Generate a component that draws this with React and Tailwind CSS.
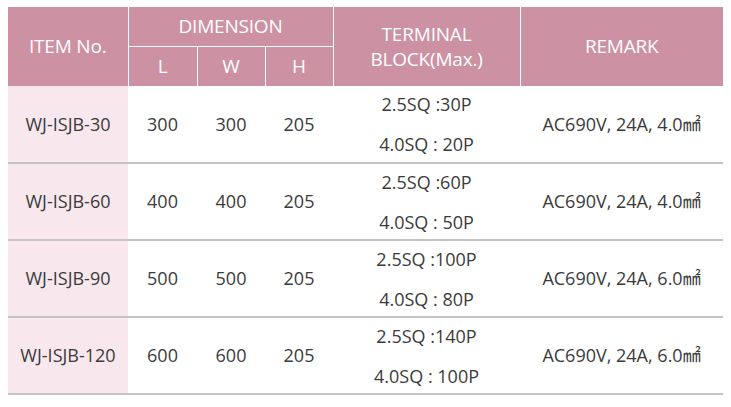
import React from "react";

const rows = [
  { item: "WJ-ISJB-30", l: 300, w: 300, h: 205, a: "2.5SQ :30P", b: "4.0SQ : 20P", remark: "AC690V, 24A, 4.0㎟" },
  { item: "WJ-ISJB-60", l: 400, w: 400, h: 205, a: "2.5SQ :60P", b: "4.0SQ : 50P", remark: "AC690V, 24A, 4.0㎟" },
  { item: "WJ-ISJB-90", l: 500, w: 500, h: 205, a: "2.5SQ :100P", b: "4.0SQ : 80P", remark: "AC690V, 24A, 6.0㎟" },
  { item: "WJ-ISJB-120", l: 600, w: 600, h: 205, a: "2.5SQ :140P", b: "4.0SQ : 100P", remark: "AC690V, 24A, 6.0㎟" },
];

const App = () => {
  return (
    <div
      className="w-[731px] h-[407px] bg-white pt-[7px] pl-[8px]"
      style={{ fontFamily: '"Open Sans", "Noto Sans CJK KR", sans-serif' }}
    >
      <table className="w-[715px] border-collapse table-fixed">
        <colgroup>
          <col className="w-[120px]" />
          <col className="w-[69px]" />
          <col className="w-[68px]" />
          <col className="w-[68px]" />
          <col className="w-[187px]" />
          <col className="w-[203px]" />
        </colgroup>
        <thead className="text-white text-[19px] tracking-[-0.2px]">
          <tr className="h-[39px]">
            <th rowSpan={2} className="bg-[#cd91a4] font-normal border-r border-white">ITEM No.</th>
            <th colSpan={3} className="bg-[#cd91a4] font-normal border-r border-b border-white">DIMENSION</th>
            <th rowSpan={2} className="bg-[#cd91a4] font-normal border-r border-white leading-[25px]">
              TERMINAL<br />BLOCK(Max.)
            </th>
            <th rowSpan={2} className="bg-[#cd91a4] font-normal">REMARK</th>
          </tr>
          <tr className="h-[40px]">
            <th className="bg-[#cd91a4] font-normal border-r border-white">L</th>
            <th className="bg-[#cd91a4] font-normal border-r border-white">W</th>
            <th className="bg-[#cd91a4] font-normal border-r border-white">H</th>
          </tr>
        </thead>
        <tbody className="text-[#3b3b3b] text-[18px]">
          {rows.map((r) => (
            <tr key={r.item} className="h-[77px] border-b-2 border-[#c4c4c4]">
              <td className="bg-[#f8e8ed] text-center">{r.item}</td>
              <td className="text-center">{r.l}</td>
              <td className="text-center">{r.w}</td>
              <td className="text-center">{r.h}</td>
              <td className="text-center">
                <div className="flex flex-col items-center gap-[16px] leading-[24px]">
                  <span>{r.a}</span>
                  <span>{r.b}</span>
                </div>
              </td>
              <td className="text-center">{r.remark}</td>
            </tr>
          ))}
        </tbody>
      </table>
    </div>
  );
};

export default App;
